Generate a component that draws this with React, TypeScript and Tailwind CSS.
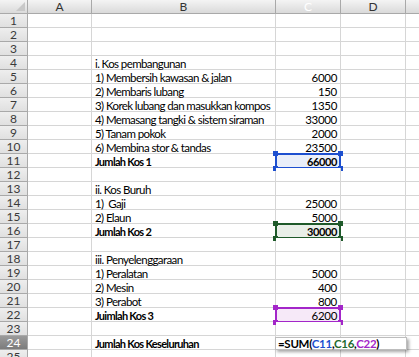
import React from 'react';

type Sel = 'blue' | 'green' | 'purple';

type Row = { b?: string; c?: string; bold?: boolean; sel?: Sel };

const rows: Row[] = [
  {},
  {},
  {},
  { b: 'i. Kos pembangunan' },
  { b: '1) Membersih kawasan & jalan', c: '6000' },
  { b: '2) Membaris lubang', c: '150' },
  { b: '3) Korek lubang dan masukkan kompos', c: '1350' },
  { b: '4) Memasang tangki & sistem siraman', c: '33000' },
  { b: '5) Tanam pokok', c: '2000' },
  { b: '6) Membina stor & tandas', c: '23500' },
  { b: 'Jumlah Kos 1', c: '66000', bold: true, sel: 'blue' },
  {},
  { b: 'ii. Kos Buruh' },
  { b: '1)  Gaji', c: '25000' },
  { b: '2) Elaun', c: '5000' },
  { b: 'Jumlah Kos 2', c: '30000', bold: true, sel: 'green' },
  {},
  { b: 'iii. Penyelenggaraan' },
  { b: '1) Peralatan', c: '5000' },
  { b: '2) Mesin', c: '400' },
  { b: '3) Perabot', c: '800' },
  { b: 'Juimlah Kos 3', c: '6200', bold: true, sel: 'purple' },
  {},
  { b: 'Jumlah Kos Keseluruhan', bold: true },
  {},
];

const selStyles: Record<Sel, { box: string; handle: string }> = {
  blue: { box: 'border-[#1d4fcf] bg-[#e9eef9]', handle: 'bg-[#1d4fcf]' },
  green: { box: 'border-[#1f5a2a] bg-[#e9efe8]', handle: 'bg-[#1f5a2a]' },
  purple: { box: 'border-[#a326c9] bg-[#f6e9f8]', handle: 'bg-[#a326c9]' },
};

const cell = 'h-[14px] border-r border-b border-[#d6d6d6] bg-white';
const hdr = 'h-[14px] border-r border-b border-[#a9a9a9] bg-gradient-to-b from-[#f4f4f4] to-[#dadada] text-[#333] text-[12px] leading-[13px] text-center';

function Selection({ kind }: { kind: Sel }) {
  const s = selStyles[kind];
  return (
    <div className={`absolute -left-[1px] -top-[1px] w-[66px] h-[16px] border-2 ${s.box}`}>
      <div className={`absolute -left-[4px] -top-[4px] w-[5px] h-[5px] ${s.handle}`} />
      <div className={`absolute -right-[4px] -top-[4px] w-[5px] h-[5px] ${s.handle}`} />
      <div className={`absolute -left-[4px] -bottom-[4px] w-[5px] h-[5px] ${s.handle}`} />
      <div className={`absolute -right-[4px] -bottom-[4px] w-[5px] h-[5px] ${s.handle}`} />
    </div>
  );
}

export default function App() {
  return (
    <div className="w-[419px] h-[357px] overflow-hidden bg-white font-['Lato','Liberation_Sans',sans-serif] text-[12px] text-black">
      <div className="grid grid-cols-[28px_64px_184px_65px_65px_60px]">
        {/* column headers */}
        <div className={`${hdr} relative`}>
          <svg className="absolute right-[2px] bottom-[2px]" width="9" height="9" viewBox="0 0 9 9">
            <polygon points="9,0 9,9 0,9" fill="#c8c8c8" />
          </svg>
        </div>
        <div className={hdr}>A</div>
        <div className={hdr}>B</div>
        <div className={`${hdr} from-[#b9b9b9] to-[#8f8f8f] text-white`}>C</div>
        <div className={hdr}>D</div>
        <div className={hdr}></div>

        {rows.map((r, i) => {
          const n = i + 1;
          const active = n === 24;
          return (
            <React.Fragment key={n}>
              <div
                className={`h-[14px] border-r border-b border-[#a9a9a9] text-center text-[12px] leading-[13px] ${
                  active ? 'bg-gradient-to-b from-[#9a9a9a] to-[#7c7c7c] text-white' : 'bg-gradient-to-b from-[#eeeeee] to-[#e0e0e0] text-[#3a3a3a]'
                }`}
              >
                {n}
              </div>
              <div className={cell}></div>
              <div
                className={`${cell} pl-[3px] leading-[15px] whitespace-pre ${
                  r.bold ? 'font-bold text-[11px] tracking-[-0.7px]' : 'text-[11.5px] tracking-[-0.6px]'
                }`}
              >
                {r.b}
              </div>
              <div className={`${cell} relative`}>
                {r.sel && <Selection kind={r.sel} />}
                {r.c && (
                  <div
                    className={`relative pr-[3px] text-right leading-[15px] ${
                      r.bold && r.sel !== 'purple' ? 'font-bold text-[11px] tracking-[-0.4px]' : 'text-[11.5px] tracking-[-0.3px]'
                    }`}
                  >
                    {r.c}
                  </div>
                )}
                {active && (
                  <div className="absolute -left-[1px] top-[1px] z-10 w-[132px] h-[13px] border border-[#bdbdbd] bg-white shadow-[2px_2px_3px_rgba(0,0,0,0.35)] pl-[2px] text-[11.5px] tracking-[-0.3px] leading-[11px] font-bold whitespace-nowrap">
                    =SUM(<span className="text-[#1d4fcf]">C11</span>,<span className="text-[#1f6a2e]">C16</span>,
                    <span className="text-[#a326c9]">C22</span>)
                  </div>
                )}
              </div>
              <div className={cell}></div>
              <div className={cell}></div>
            </React.Fragment>
          );
        })}
      </div>
    </div>
  );
}
